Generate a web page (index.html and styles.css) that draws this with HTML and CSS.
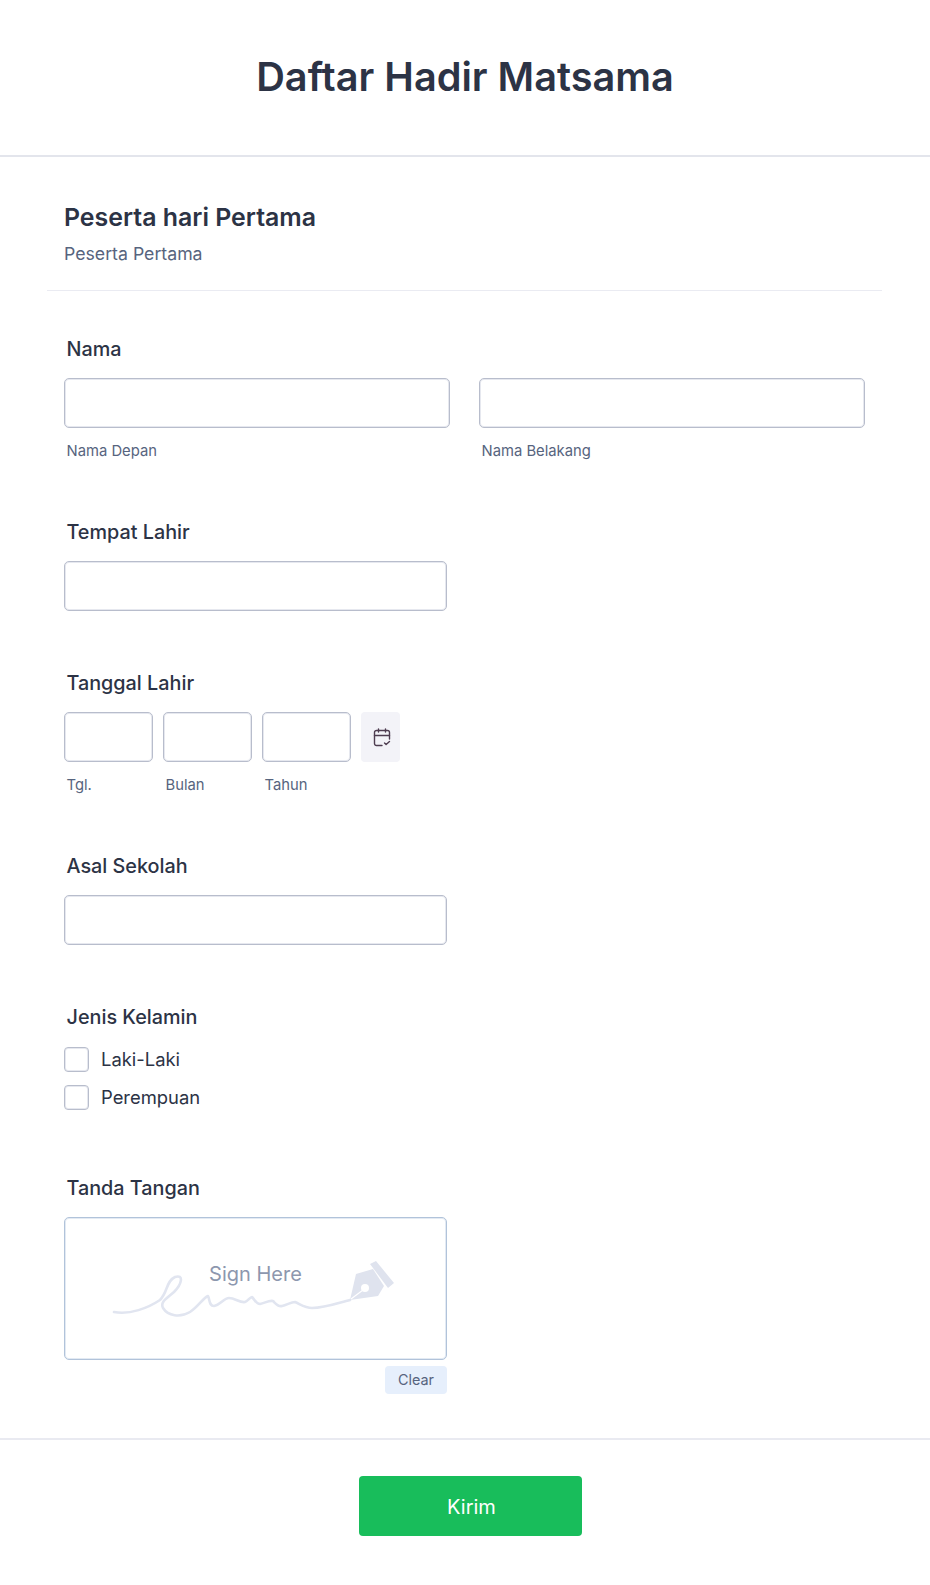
FILE: index.html
```html
<!DOCTYPE html>
<html>
	<head>
		<title>Daftar Hadir Matsama</title><meta charset="utf-8">
		<link rel="stylesheet" href="styles.css">
	</head>
	<body>
		<div class="top"><h1>Daftar Hadir Matsama</h1></div>

		<div class="form">
			<div class="section">
				<h2>Peserta hari Pertama</h2>
				<p>Peserta Pertama</p>
			</div>

			<div class="field">
				<div class="label">Nama</div>
				<div class="two">
					<div><div class="box"></div><div class="sub">Nama Depan</div></div>
					<div><div class="box"></div><div class="sub">Nama Belakang</div></div>
				</div>
			</div>

			<div class="field">
				<div class="label">Tempat Lahir</div>
				<div class="box wide"></div>
			</div>

			<div class="field">
				<div class="label">Tanggal Lahir</div>
				<div class="date">
					<div><div class="box"></div><div class="sub">Tgl.</div></div>
					<div><div class="box"></div><div class="sub">Bulan</div></div>
					<div><div class="box"></div><div class="sub">Tahun</div></div>
					<div class="cal">
						<svg width="18" height="19" viewBox="0 0 18 19" fill="none" stroke="#4e3d50" stroke-width="1.4" stroke-linecap="round" stroke-linejoin="round">
							<path d="M9 17.500H3.500a2 2 0 0 1-2-2V4.500a2 2 0 0 1 2-2h11a2 2 0 0 1 2 2V11"/>
							<path d="M1.500 7.500h15M5.500 1v3M12.500 1v3"/>
							<path d="M11.500 15l1.600 1.600L16.500 13.500"/>
						</svg>
					</div>
				</div>
			</div>

			<div class="field">
				<div class="label">Asal Sekolah</div>
				<div class="box wide"></div>
			</div>

			<div class="field check-field">
				<div class="label">Jenis Kelamin</div>
				<div class="check"><span class="tick"></span>Laki-Laki</div>
				<div class="check"><span class="tick"></span>Perempuan</div>
			</div>

			<div class="field sign-field">
				<div class="label">Tanda Tangan</div>
				<div class="sign">
					<svg viewBox="65 1218 381 141" width="381" height="141">
						<path fill="none" stroke="#e1e5f0" stroke-width="2.600" stroke-linecap="round" stroke-linejoin="round" d="M114 1312C130 1315 148 1308 160 1300C168 1292 166 1281 175 1277C184 1274 182 1284 174 1292C166 1299 160 1302 163 1308C168 1316 180 1318 190 1312C198 1307 203 1298 208 1296C210 1300 209 1306 214 1306C220 1305 224 1298 229 1298C235 1298 240 1303 245 1302C248 1301 250 1297 252 1297C255 1300 256 1304 260 1304C265 1303 269 1300 273 1301C276 1304 278 1307 282 1306C287 1305 291 1302 295 1302C300 1304 305 1308 312 1308C325 1308 338 1303 350 1300"/>
						<path fill="#dfe3ee" d="M350 1300L356 1274L373 1269L384 1286L378 1296Z"/>
						<path fill="#dfe3ee" d="M370 1264L376 1261L394 1283L388 1288Z"/>
						<circle cx="365" cy="1288" r="4" fill="#fff"/>
						<path stroke="#fff" stroke-width="1.200" d="M351 1299L363 1290"/>
					</svg>
					<span class="here">Sign Here</span>
				</div>
				<div class="clear-row"><span class="clear">Clear</span></div>
			</div>
		</div>

		<div class="bottom"><button class="send">Kirim</button></div>
	</body>
</html>
```

FILE: styles.css
```css
* { box-sizing: border-box; }
body { margin: 0; background: white; color: #2c3345; font-family: Inter, "Liberation Sans", sans-serif; }

.top { height: 157px; padding-bottom: 2px; border-bottom: 2px solid #e3e5ec; display: flex; align-items: center; justify-content: center; }
h1 { margin: 0; font-size: 39.700px; font-weight: 600; line-height: 48px; }

.form { margin: 0 48px; }
.section { height: 134px; padding: 44px 16px 0 17px; margin-left: -1px; border-bottom: 1px solid #eaebf2; margin-bottom: 47px; }
h2 { margin: 0; font-size: 24.900px; font-weight: 600; line-height: 32px; }
.section p { margin: 9px 0 0; font-size: 17.700px; line-height: 24px; color: #57647e; }

.field { padding: 0 16px; margin-bottom: 61px; }
.label { font-size: 19.800px; font-weight: 500; line-height: 22px; padding-left: 2.500px; margin-bottom: 18px; }
.sub { font-size: 14.800px; line-height: 18px; color: #57647e; padding-left: 2.500px; margin-top: 14px; }
.box { height: 50px; border: 1px solid #b8bdcc; box-shadow: inset 0 0 0 1px #e6e8ef; border-radius: 5px; background: white; }
.wide { width: 383px; }

.two { display: grid; grid-template-columns: 386px 386px; column-gap: 29px; }
.date { display: grid; grid-template-columns: 89px 89px 89px 39px; column-gap: 10px; }
.cal { height: 50px; padding-left: 3px; border-radius: 4px; background: #f3f3f8; display: flex; align-items: center; justify-content: center; }

.check-field { margin-bottom: 67px; }
.check { display: flex; align-items: flex-start; height: 25px; margin-bottom: 13px; font-size: 18.400px; line-height: 25px; color: #2c3345; }
.label + .check { margin-top: 19px; }
.check:last-child { margin-bottom: 0; }
.check-field .label { margin-bottom: 0; }
.tick { width: 25px; height: 25px; border: 1px solid #b8bdcc; box-shadow: inset 0 0 0 1px #e6e8ef; border-radius: 4px; margin-right: 12px; }

.sign-field { margin-bottom: 0; }
.sign { position: relative; width: 383px; height: 143px; border: 1px solid #b1c3da; box-shadow: inset 0 0 0 1px #e3eaf3; border-radius: 5px; }
.sign svg { display: block; }
.here { position: absolute; top: 44px; left: 0; right: 0; text-align: center; font-size: 20px; line-height: 24px; color: #8d97ae; }
.clear-row { width: 383px; display: flex; justify-content: flex-end; margin-top: 6px; }
.clear { width: 62px; height: 28px; line-height: 28px; text-align: center; font-size: 14.400px; color: #57647e; background: #e6effc; border-radius: 4px; }

.bottom { margin-top: 44px; border-top: 2px solid #e9eaf1; padding: 36px 0 0 359px; }
.send { width: 223px; height: 60px; padding: 2px 0 0 2px; border: none; border-radius: 4px; background: #18bd5b; color: white; font-family: Inter, "Liberation Sans", sans-serif; font-size: 20px; font-weight: 400; cursor: pointer; }
```
